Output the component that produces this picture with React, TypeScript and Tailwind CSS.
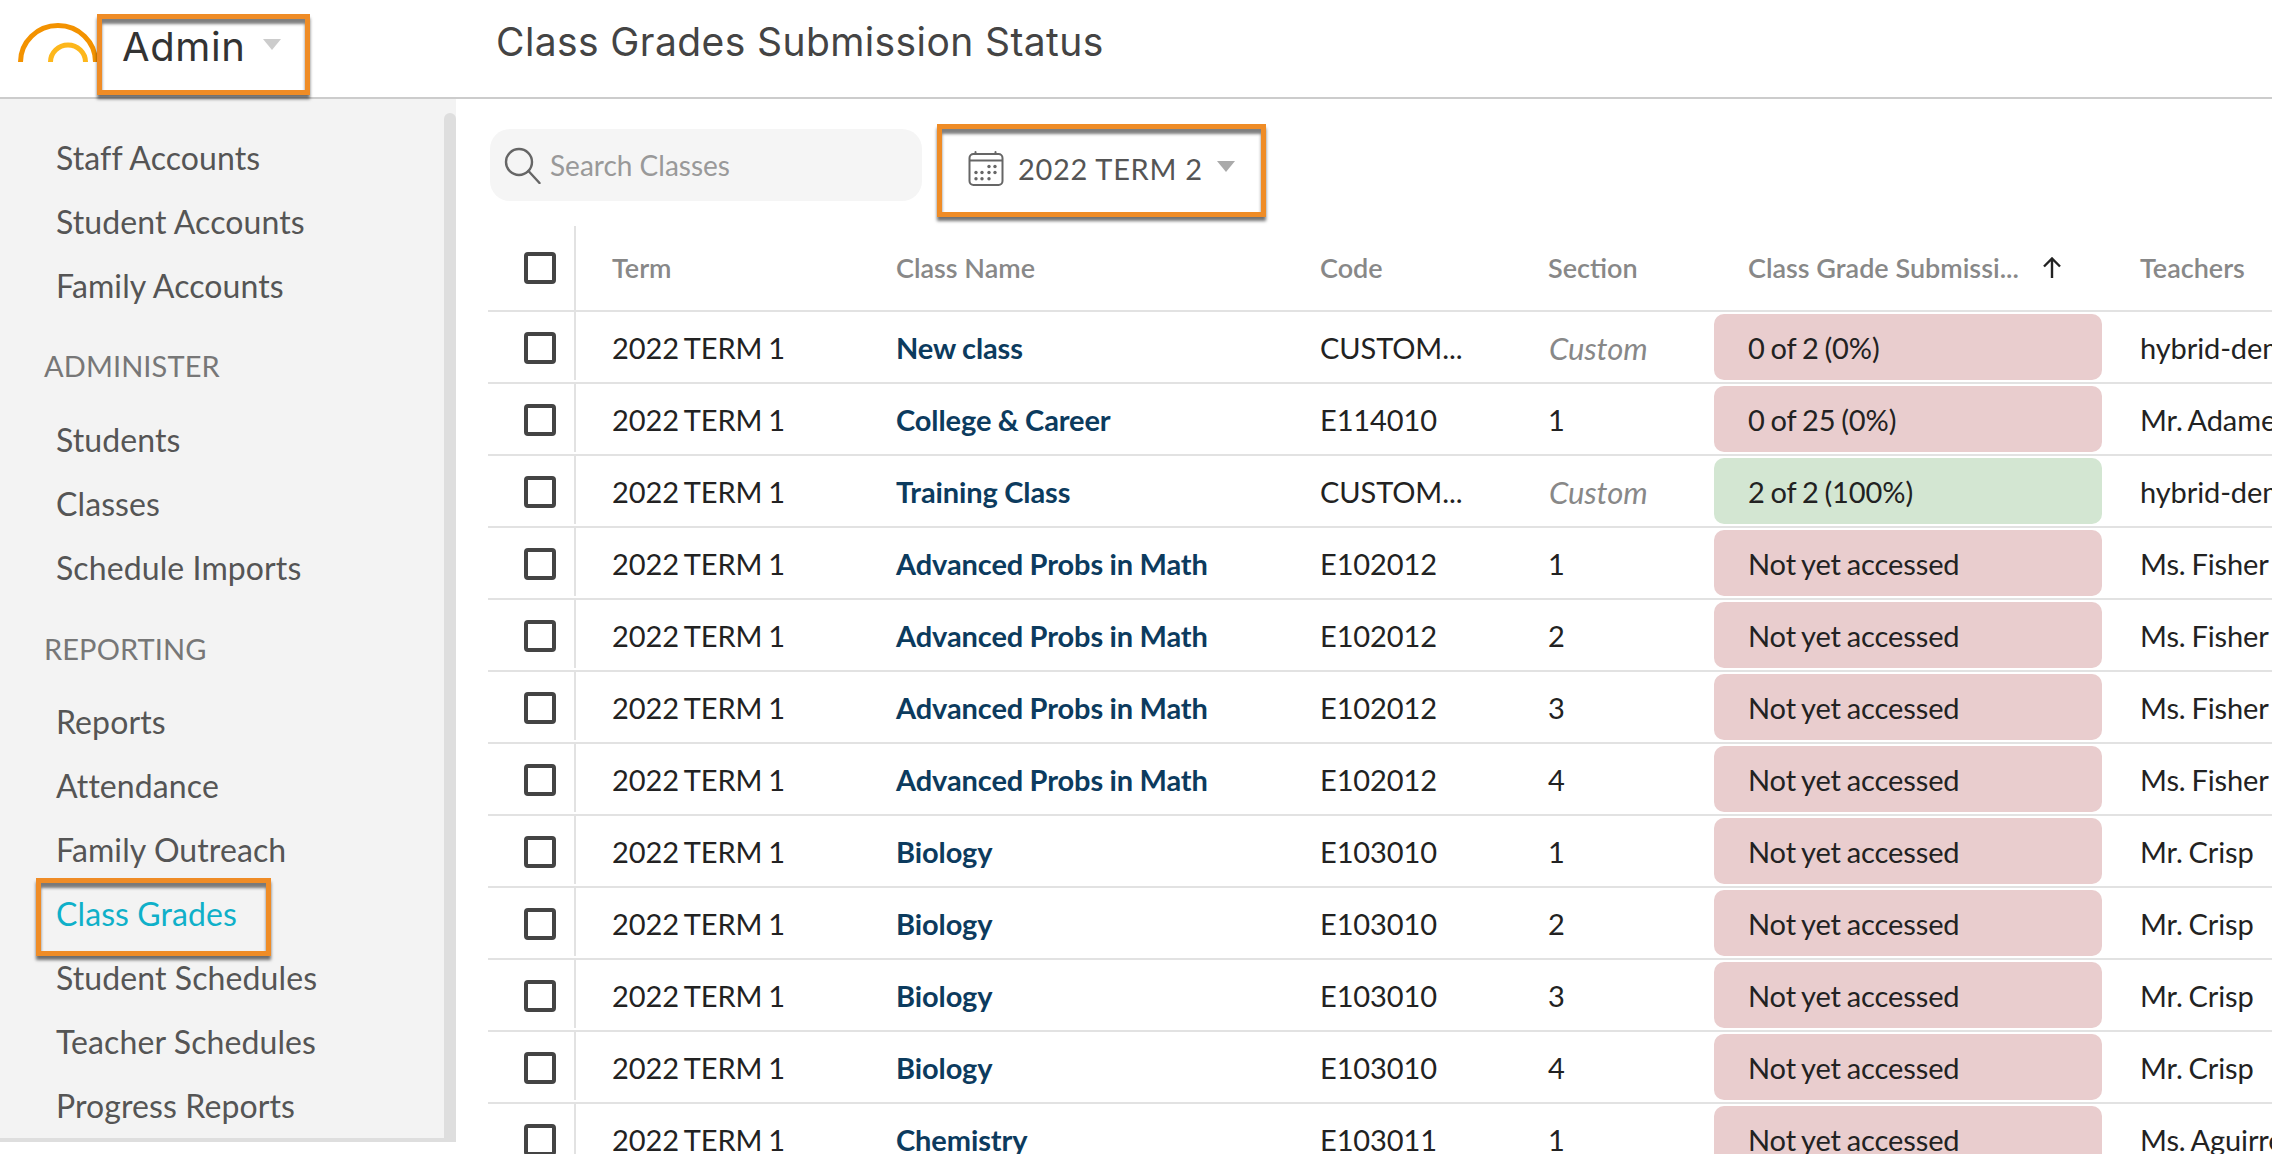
const accountLinks = ['Staff Accounts', 'Student Accounts', 'Family Accounts'];
const administerLinks = ['Students', 'Classes', 'Schedule Imports'];
const reportingLinks = [
  'Reports',
  'Attendance',
  'Family Outreach',
  'Class Grades',
  'Student Schedules',
  'Teacher Schedules',
  'Progress Reports',
];

interface Row {
  name: string;
  code: string;
  section: string;
  status: string;
  teacher: string;
}

const rows: Row[] = [
  { name: 'New class', code: 'CUSTOM...', section: 'Custom', status: '0 of 2 (0%)', teacher: 'hybrid-demo' },
  { name: 'College & Career', code: 'E114010', section: '1', status: '0 of 25 (0%)', teacher: 'Mr. Adame' },
  { name: 'Training Class', code: 'CUSTOM...', section: 'Custom', status: '2 of 2 (100%)', teacher: 'hybrid-demo' },
  { name: 'Advanced Probs in Math', code: 'E102012', section: '1', status: 'Not yet accessed', teacher: 'Ms. Fisher' },
  { name: 'Advanced Probs in Math', code: 'E102012', section: '2', status: 'Not yet accessed', teacher: 'Ms. Fisher' },
  { name: 'Advanced Probs in Math', code: 'E102012', section: '3', status: 'Not yet accessed', teacher: 'Ms. Fisher' },
  { name: 'Advanced Probs in Math', code: 'E102012', section: '4', status: 'Not yet accessed', teacher: 'Ms. Fisher' },
  { name: 'Biology', code: 'E103010', section: '1', status: 'Not yet accessed', teacher: 'Mr. Crisp' },
  { name: 'Biology', code: 'E103010', section: '2', status: 'Not yet accessed', teacher: 'Mr. Crisp' },
  { name: 'Biology', code: 'E103010', section: '3', status: 'Not yet accessed', teacher: 'Mr. Crisp' },
  { name: 'Biology', code: 'E103010', section: '4', status: 'Not yet accessed', teacher: 'Mr. Crisp' },
  { name: 'Chemistry', code: 'E103011', section: '1', status: 'Not yet accessed', teacher: 'Ms. Aguirre' },
];

const gridCols = 'grid grid-cols-[88px_320px_424px_227px_167px_388px_1fr]';
const highlight =
  'pointer-events-none absolute border-[5px] border-[#ef8c26] shadow-[0_4px_3px_rgba(0,0,0,0.55),inset_0_5px_3px_rgba(0,0,0,0.5)]';

function Logo() {
  return (
    <svg width="80" height="42" viewBox="0 0 80 42" fill="none" className="shrink-0">
      <path d="M2.5 41 A37 36 0 0 1 77.5 41" stroke="#f39200" strokeWidth="5" />
      <path d="M32.5 41 A17.5 17 0 0 1 67.5 41" stroke="#fdb71c" strokeWidth="5" />
    </svg>
  );
}

function Caret({ className }: { className: string }) {
  return <span className={`h-0 w-0 border-x-[9px] border-t-[11px] border-x-transparent ${className}`} />;
}

function SearchIcon() {
  return (
    <svg width="37" height="37" viewBox="0 0 37 37" fill="none" stroke="#666" strokeWidth="2.4" className="shrink-0">
      <circle cx="15" cy="15" r="13" />
      <path d="M24.5 24 L35.5 36" strokeLinecap="round" />
    </svg>
  );
}

function CalendarIcon() {
  const dots = [
    [21, 15.5], [27, 15.5], [8, 21.5], [14, 21.5], [21, 21.5], [27, 21.5], [8, 27.8], [14, 27.8], [21, 27.8],
  ];
  return (
    <svg width="36" height="36" viewBox="0 0 36 36" fill="none" stroke="#666" strokeWidth="2" className="shrink-0">
      <rect x="1.5" y="3" width="33" height="31" rx="4" />
      <path d="M1.5 9.5 H34.5" />
      <path d="M7.5 1 V3 M27.5 1 V3" strokeLinecap="round" />
      {dots.map(([x, y]) => (
        <circle key={`${x}-${y}`} cx={x} cy={y} r="1.7" fill="#666" stroke="none" />
      ))}
    </svg>
  );
}

function Checkbox() {
  return <span className="block h-[32px] w-[32px] rounded-[4px] border-[4px] border-[#444]" />;
}

function NavLink({ label }: { label: string }) {
  if (label === 'Class Grades') {
    return (
      <li className="relative flex h-[64px] items-center pl-[56px] text-[#0fb0c9]">
        {label}
        <span className={`${highlight} left-[36px] top-[-4px] h-[78px] w-[235px]`} />
      </li>
    );
  }
  return <li className="flex h-[64px] items-center pl-[56px]">{label}</li>;
}

function NavLabel({ children, className }: { children: string; className: string }) {
  return <p className={`flex h-[64px] items-center pl-[44px] text-[29px] text-[#777] ${className}`}>{children}</p>;
}

function Sidebar() {
  return (
    <aside className="flex h-[1043px] w-[456px] shrink-0 flex-col bg-[#f3f3f3]">
      <div className="flex min-h-0 flex-1">
        <nav className="flex-1 pt-[27px] text-[32px] tracking-[0.1px] text-[#555]">
          <ul>{accountLinks.map((l) => <NavLink key={l} label={l} />)}</ul>
          <NavLabel className="mt-[16px] mb-[10px]">ADMINISTER</NavLabel>
          <ul>{administerLinks.map((l) => <NavLink key={l} label={l} />)}</ul>
          <NavLabel className="mt-[17px] mb-[9px]">REPORTING</NavLabel>
          <ul>{reportingLinks.map((l) => <NavLink key={l} label={l} />)}</ul>
        </nav>
        <div className="mt-[14px] w-[12px] rounded-t-md bg-[#dedede]" />
      </div>
      <div className="h-[4px] bg-[#dedede]" />
    </aside>
  );
}

function TableHeader() {
  return (
    <div className={`${gridCols} h-[86px] items-center border-b-[2px] border-[#e2e2e2] text-[27px] font-semibold text-[#888]`}>
      <div className="flex h-full items-center border-r-[2px] border-[#e2e2e2] pl-[36px]">
        <Checkbox />
      </div>
      <div className="pl-[36px]">Term</div>
      <div>Class Name</div>
      <div>Code</div>
      <div className="pl-[1px]">Section</div>
      <div className="flex items-center pl-[34px]">
        Class Grade Submissi...
        <svg width="24" height="22" viewBox="0 0 24 22" fill="none" stroke="#222" strokeWidth="2.4" className="ml-[21px]">
          <path d="M12 21 V2 M4 9.5 L12 1.5 L20 9.5" />
        </svg>
      </div>
      <div className="pl-[38px]">Teachers</div>
    </div>
  );
}

function TableRow({ row }: { row: Row }) {
  const isComplete = row.status.startsWith('2 of 2');
  return (
    <div className={`${gridCols} h-[72px] items-center border-b-[2px] border-[#e2e2e2] text-[29px] tracking-[-0.1px] [word-spacing:-1.5px] text-[#222]`}>
      <div className="flex h-[68px] items-center self-start border-r-[2px] border-[#e2e2e2] pl-[36px] pt-[3px]">
        <Checkbox />
      </div>
      <div className="pl-[36px] pt-[2px]">2022 TERM 1</div>
      <div className="pt-[2px] font-bold [word-spacing:-0.5px] text-[#0c3b5e]">{row.name}</div>
      <div className="pt-[2px]">{row.code}</div>
      <div className={row.section === 'Custom' ? 'pl-[2px] pt-[2px] text-[31px] italic text-[#888]' : 'pl-[1px] pt-[2px]'}>{row.section}</div>
      <div className={`flex h-[66px] items-center rounded-[10px] pl-[34px] pt-[2px] ${isComplete ? 'bg-[#d3e6d2]' : 'bg-[#e9cdce]'}`}>
        {row.status}
      </div>
      <div className="whitespace-nowrap pl-[38px] pt-[2px]">{row.teacher}</div>
    </div>
  );
}

export default function App() {
  return (
    <div className="flex h-screen flex-col overflow-hidden bg-white font-[Lato,sans-serif]">
      <header className="flex h-[99px] shrink-0 items-start border-b-[2px] border-[#ccc]">
        <div className="flex w-[496px] shrink-0 items-start">
          <div className="ml-[18px] mt-[21px]">
            <Logo />
          </div>
          <div className="relative ml-[24px] mt-[22px] flex items-center font-[Inter,sans-serif] text-[40px] font-normal tracking-[0.6px] leading-[50px] text-[#333]">
            Admin
            <Caret className="ml-[18px] mb-[6px] border-t-[#ccc]" />
            <span className={`${highlight} left-[-25px] top-[-8px] h-[81px] w-[213px]`} />
          </div>
        </div>
        <h1 className="mt-[18px] font-[Inter,sans-serif] text-[39px] font-normal tracking-[0.4px] leading-[48px] text-[#444]">
          Class Grades Submission Status
        </h1>
      </header>

      <div className="flex min-h-0 flex-1 items-start">
        <Sidebar />
        <main className="min-w-0 flex-1 overflow-hidden pl-[32px]">
          <div className="flex h-[127px] items-start">
            <div className="ml-[2px] mt-[30px] flex h-[72px] w-[432px] items-center rounded-[20px] bg-[#f5f5f5] pl-[14px] text-[28px] text-[#999]">
              <SearchIcon />
              <span className="ml-[9px]">Search Classes</span>
            </div>
            <div className="relative ml-[15px] mt-[25px] flex h-[93px] w-[329px] items-center pb-[4px] pl-[31px] text-[29px] tracking-[0.7px] text-[#555]">
              <CalendarIcon />
              <span className="ml-[14px]">2022 TERM 2</span>
              <Caret className="ml-[14px] mb-[4px] border-t-[#aaa]" />
              <span className={`${highlight} inset-0`} />
            </div>
          </div>
          <div className="w-[1816px]">
            <TableHeader />
            {rows.map((row, i) => (
              <TableRow key={i} row={row} />
            ))}
          </div>
        </main>
      </div>
    </div>
  );
}
